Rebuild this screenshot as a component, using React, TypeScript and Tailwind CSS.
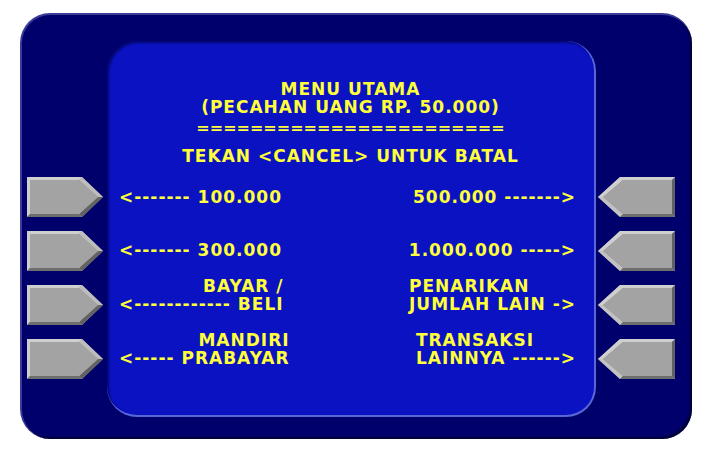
import React from 'react';

const YELLOW = 'text-[#ffff3a]';
const LINE = 'text-[17px] leading-[18px] font-bold tracking-[1px] whitespace-pre';

const LeftKey = () => (
  <svg width="76" height="40" viewBox="0 0 76 40" className="block">
    <polygon points="0,0 55,0 76,20 55,40 0,40" fill="#9c9c9c" />
    <polygon points="0,0 55,0 52,3 3,3 3,37 0,40" fill="#cfcfcf" />
    <polygon points="55,0 76,20 71,20 52,3" fill="#bdbdbd" />
    <polygon points="76,20 55,40 52,37 71,20" fill="#626262" />
    <polygon points="0,40 3,37 52,37 55,40" fill="#6e6e6e" />
    <polygon points="3,3 52,3 71,20 52,37 3,37" fill="#a3a3a3" />
  </svg>
);

const RightKey = () => (
  <svg width="77" height="40" viewBox="0 0 77 40" className="block">
    <polygon points="77,0 22,0 0,20 22,40 77,40" fill="#9c9c9c" />
    <polygon points="22,0 77,0 74,3 25,3 5,20 0,20" fill="#cfcfcf" />
    <polygon points="0,20 5,20 25,37 22,40" fill="#c2c2c2" />
    <polygon points="77,0 77,40 74,37 74,3" fill="#626262" />
    <polygon points="22,40 25,37 74,37 77,40" fill="#6e6e6e" />
    <polygon points="25,3 74,3 74,37 25,37 5,20" fill="#a3a3a3" />
  </svg>
);

type Item = { lines: string[] };

const LEFT: Item[] = [
  { lines: ['<------- 100.000'] },
  { lines: ['<------- 300.000'] },
  { lines: ['BAYAR /', '<------------ BELI'] },
  { lines: ['MANDIRI', '<----- PRABAYAR'] },
];

const RIGHT: Item[] = [
  { lines: ['500.000 ------->'] },
  { lines: ['1.000.000 ----->'] },
  { lines: ['PENARIKAN', 'JUMLAH LAIN ->'] },
  { lines: ['TRANSAKSI', 'LAINNYA ------>'] },
];

export default function App() {
  return (
    <div
      className="w-[711px] h-[457px] bg-white pt-[13px] pl-[20px]"
      style={{ fontFamily: '"DejaVu Sans", Verdana, sans-serif' }}
    >
      <div className="w-[672px] h-[426px] flex bg-[#00006c] rounded-[30px] border-l-2 border-t-2 border-[#3c3c98] shadow-[inset_-2px_-2px_2px_rgba(0,0,30,0.7)] pl-[5px] pr-[15px] pt-[26px]">
        {/* left keys */}
        <div className="flex flex-col gap-[14px] pt-[136px] w-[76px] shrink-0">
          {LEFT.map((_, i) => (
            <LeftKey key={i} />
          ))}
        </div>

        {/* screen */}
        <div className="ml-[4px] w-[489px] h-[376px] shrink-0 rounded-[30px] bg-[#0a12c2] border-r-2 border-b-2 border-[#5866d6] shadow-[inset_2px_2px_2px_rgba(0,0,60,0.6)] flex flex-col">
          <div className={`pt-[39px] flex flex-col items-center ${YELLOW}`}>
            <div className={LINE}>MENU UTAMA</div>
            <div className={LINE}>(PECAHAN UANG RP. 50.000)</div>
            <div className="text-[16px] leading-[24px] font-bold">=======================</div>
            <div className={`mt-[7px] ${LINE}`}>TEKAN &lt;CANCEL&gt; UNTUK BATAL</div>
          </div>

          <div className="mt-[12px] flex flex-col gap-[14px]">
            {LEFT.map((l, i) => (
              <div key={i} className="flex h-10">
                <div className={`flex-1 flex flex-col justify-end pl-[12px] ${i === 0 ? 'pb-[11px]' : 'pb-[12px]'}`}>
                  <div className={`self-start flex flex-col items-end ${LINE} ${YELLOW}`}>
                    {l.lines.map((t) => (
                      <div key={t}>{t}</div>
                    ))}
                  </div>
                </div>
                <div className={`flex-1 flex flex-col justify-end pr-[18px] ${i === 0 ? 'pb-[11px]' : 'pb-[12px]'}`}>
                  <div className={`self-end flex flex-col items-start ${LINE} ${YELLOW}`}>
                    {RIGHT[i].lines.map((t) => (
                      <div key={t}>{t}</div>
                    ))}
                  </div>
                </div>
              </div>
            ))}
          </div>
        </div>

        {/* right keys */}
        <div className="ml-[2px] flex flex-col gap-[14px] pt-[136px] w-[77px] shrink-0">
          {RIGHT.map((_, i) => (
            <RightKey key={i} />
          ))}
        </div>
      </div>
    </div>
  );
}
